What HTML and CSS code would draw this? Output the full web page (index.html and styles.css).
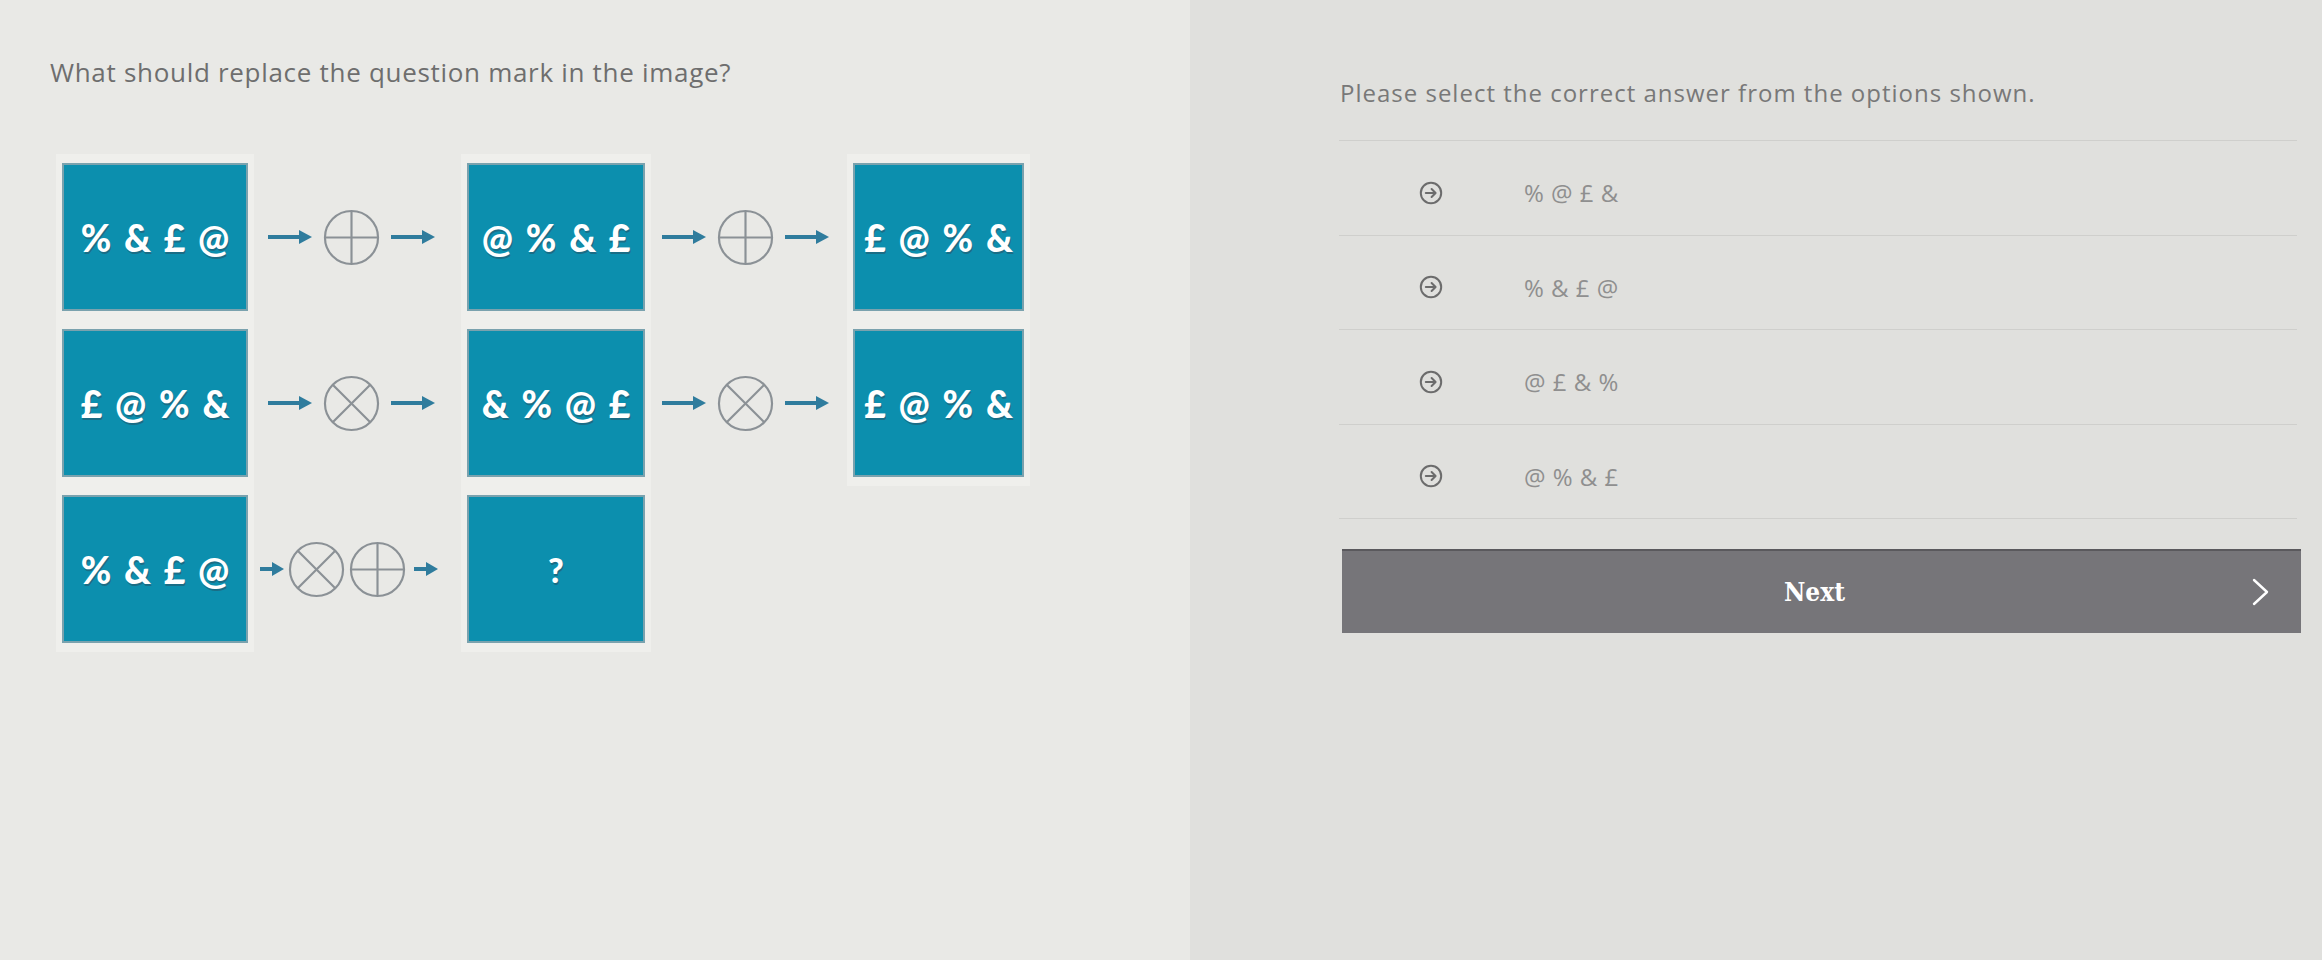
FILE: index.html
```html
<!DOCTYPE html>
<html>
<head>
<meta charset="utf-8">
<link rel="stylesheet" href="styles.css">
</head>
<body>
<div class="page">
  <section class="left">
    <p class="question">What should replace the question mark in the image?</p>
    <div class="puzzle">
      <div class="frame"><div class="tile">% &amp; £ @</div></div>
      <div class="conn">
        <svg class="arrow" viewBox="0 0 44 14"><rect x="0" y="5" width="33" height="4"/><polygon points="31,0 44,7 31,14"/></svg>
        <svg class="op" viewBox="0 0 58 58"><circle cx="29" cy="29" r="27"/><line x1="29" y1="2" x2="29" y2="56"/><line x1="2" y1="29" x2="56" y2="29"/></svg>
        <svg class="arrow" viewBox="0 0 44 14"><rect x="0" y="5" width="33" height="4"/><polygon points="31,0 44,7 31,14"/></svg>
      </div>
      <div class="frame"><div class="tile">@ % &amp; £</div></div>
      <div class="conn conn2">
        <svg class="arrow" viewBox="0 0 44 14"><rect x="0" y="5" width="33" height="4"/><polygon points="31,0 44,7 31,14"/></svg>
        <svg class="op" viewBox="0 0 58 58"><circle cx="29" cy="29" r="27"/><line x1="29" y1="2" x2="29" y2="56"/><line x1="2" y1="29" x2="56" y2="29"/></svg>
        <svg class="arrow" viewBox="0 0 44 14"><rect x="0" y="5" width="33" height="4"/><polygon points="31,0 44,7 31,14"/></svg>
      </div>
      <div class="frame"><div class="tile">£ @ % &amp;</div></div>

      <div class="frame"><div class="tile">£ @ % &amp;</div></div>
      <div class="conn">
        <svg class="arrow" viewBox="0 0 44 14"><rect x="0" y="5" width="33" height="4"/><polygon points="31,0 44,7 31,14"/></svg>
        <svg class="op" viewBox="0 0 58 58"><circle cx="29" cy="29" r="27"/><line x1="9.9" y1="9.9" x2="48.1" y2="48.1"/><line x1="48.1" y1="9.9" x2="9.9" y2="48.1"/></svg>
        <svg class="arrow" viewBox="0 0 44 14"><rect x="0" y="5" width="33" height="4"/><polygon points="31,0 44,7 31,14"/></svg>
      </div>
      <div class="frame"><div class="tile">&amp; % @ £</div></div>
      <div class="conn conn2">
        <svg class="arrow" viewBox="0 0 44 14"><rect x="0" y="5" width="33" height="4"/><polygon points="31,0 44,7 31,14"/></svg>
        <svg class="op" viewBox="0 0 58 58"><circle cx="29" cy="29" r="27"/><line x1="9.9" y1="9.9" x2="48.1" y2="48.1"/><line x1="48.1" y1="9.9" x2="9.9" y2="48.1"/></svg>
        <svg class="arrow" viewBox="0 0 44 14"><rect x="0" y="5" width="33" height="4"/><polygon points="31,0 44,7 31,14"/></svg>
      </div>
      <div class="frame"><div class="tile">£ @ % &amp;</div></div>

      <div class="frame"><div class="tile">% &amp; £ @</div></div>
      <div class="conn conn3">
        <svg class="arrow short" viewBox="0 0 24 14"><rect x="0" y="5" width="14" height="4"/><polygon points="12,0 24,7 12,14"/></svg>
        <svg class="op" viewBox="0 0 58 58"><circle cx="29" cy="29" r="27"/><line x1="9.9" y1="9.9" x2="48.1" y2="48.1"/><line x1="48.1" y1="9.9" x2="9.9" y2="48.1"/></svg>
        <svg class="op" viewBox="0 0 58 58"><circle cx="29" cy="29" r="27"/><line x1="29" y1="2" x2="29" y2="56"/><line x1="2" y1="29" x2="56" y2="29"/></svg>
        <svg class="arrow short" viewBox="0 0 24 14"><rect x="0" y="5" width="14" height="4"/><polygon points="12,0 24,7 12,14"/></svg>
      </div>
      <div class="frame"><div class="tile q">?</div></div>
    </div>
  </section>
  <section class="right">
    <p class="prompt">Please select the correct answer from the options shown.</p>
    <ul class="options">
      <li class="option">
        <svg class="pick" viewBox="0 0 24 24"><circle cx="12" cy="12" r="10.2"/><path d="M6.8 12h9.6M12.6 8l4 4-4 4"/></svg>
        <span class="answer">% @ £ &amp;</span>
      </li>
      <li class="option">
        <svg class="pick" viewBox="0 0 24 24"><circle cx="12" cy="12" r="10.2"/><path d="M6.8 12h9.6M12.6 8l4 4-4 4"/></svg>
        <span class="answer">% &amp; £ @</span>
      </li>
      <li class="option">
        <svg class="pick" viewBox="0 0 24 24"><circle cx="12" cy="12" r="10.2"/><path d="M6.8 12h9.6M12.6 8l4 4-4 4"/></svg>
        <span class="answer">@ £ &amp; %</span>
      </li>
      <li class="option">
        <svg class="pick" viewBox="0 0 24 24"><circle cx="12" cy="12" r="10.2"/><path d="M6.8 12h9.6M12.6 8l4 4-4 4"/></svg>
        <span class="answer">@ % &amp; £</span>
      </li>
    </ul>
    <button class="next">
      <span class="next-label">Next</span>
      <svg class="chev" viewBox="0 0 18 28"><polyline points="2,2 15,14 2,26"/></svg>
    </button>
  </section>
</div>
</body>
</html>
```

FILE: styles.css
```css
* { box-sizing: border-box; }

html, body {
  margin: 0;
  padding: 0;
}

body {
  width: 2322px;
  height: 960px;
  overflow: hidden;
  font-family: "Open Sans", "Liberation Sans", sans-serif;
}

.page {
  display: flex;
  width: 2322px;
  height: 960px;
}

.left {
  width: 1190px;
  height: 100%;
  background: #e9e9e6;
  padding: 56px 0 0 50px;
}

.question {
  margin: 0;
  font-size: 26px;
  line-height: 33px;
  color: #6e6e6e;
  letter-spacing: 0.7px;
}

.puzzle {
  display: grid;
  grid-template-columns: 198px 207px 190px 196px 183px;
  grid-auto-rows: 166px;
  margin: 65px 0 0 6px;
}

.frame {
  display: flex;
  background: #efefec;
  padding: 9px 6px;
}

.tile {
  flex: 1;
  display: flex;
  align-items: center;
  justify-content: center;
  background: #0c8fae;
  border: 2px solid #7aa2ae;
  color: #ffffff;
  font-family: "Lato", "Open Sans", sans-serif;
  font-weight: 900;
  font-size: 37px;
  word-spacing: 4px;
  text-shadow: 1px 2px 0 rgba(40, 80, 100, 0.55);
  white-space: nowrap;
}

.tile.q {
  font-size: 34px;
}

.conn {
  display: flex;
  align-items: center;
  gap: 11px;
  padding-left: 14px;
}

.conn2 {
  padding-left: 11px;
}

.conn3 {
  gap: 4px;
  padding-left: 6px;
}

.arrow {
  width: 44px;
  height: 14px;
  fill: #2f7c9d;
}

.arrow.short {
  width: 24px;
}

.conn3 .arrow.short:last-child {
  margin-left: 4px;
}

.op {
  width: 57px;
  height: 57px;
  fill: none;
  stroke: #8b9196;
  stroke-width: 2.2;
}

.right {
  flex: 1;
  height: 100%;
  background: #e0e0dd;
  padding: 78px 0 0 150px;
}

.prompt {
  margin: 0;
  font-size: 24px;
  line-height: 30px;
  color: #787878;
  letter-spacing: 1px;
}

.options {
  list-style: none;
  margin: 32px 0 0 -1px;
  padding: 0;
  width: 958px;
  border-bottom: 1.5px solid #cfcfcc;
}

.option {
  display: flex;
  align-items: center;
  height: 94.5px;
  border-top: 1.5px solid #cfcfcc;
  padding: 10px 0 0 80px;
}

.pick {
  width: 24px;
  height: 24px;
  fill: none;
  stroke: #6c6c6c;
  stroke-width: 2;
  stroke-linecap: round;
  stroke-linejoin: round;
}

.answer {
  margin-left: 81px;
  font-size: 24px;
  color: #8f8f8f;
  word-spacing: 1px;
}

.next {
  display: flex;
  align-items: center;
  justify-content: center;
  position: relative;
  width: 959px;
  height: 84px;
  margin: 30px 0 0 2px;
  padding: 0;
  border: none;
  border-top: 2px solid #5a595d;
  background: #767579;
  color: #ffffff;
  font-family: "DejaVu Serif Condensed", "DejaVu Serif", serif;
  font-weight: bold;
  font-size: 26px;
}

.next-label {
  margin-left: -14px;
}

.chev {
  position: absolute;
  right: 31px;
  top: 27px;
  width: 18px;
  height: 28px;
  fill: none;
  stroke: #ffffff;
  stroke-width: 2.4;
  stroke-linecap: round;
  stroke-linejoin: round;
}
```
